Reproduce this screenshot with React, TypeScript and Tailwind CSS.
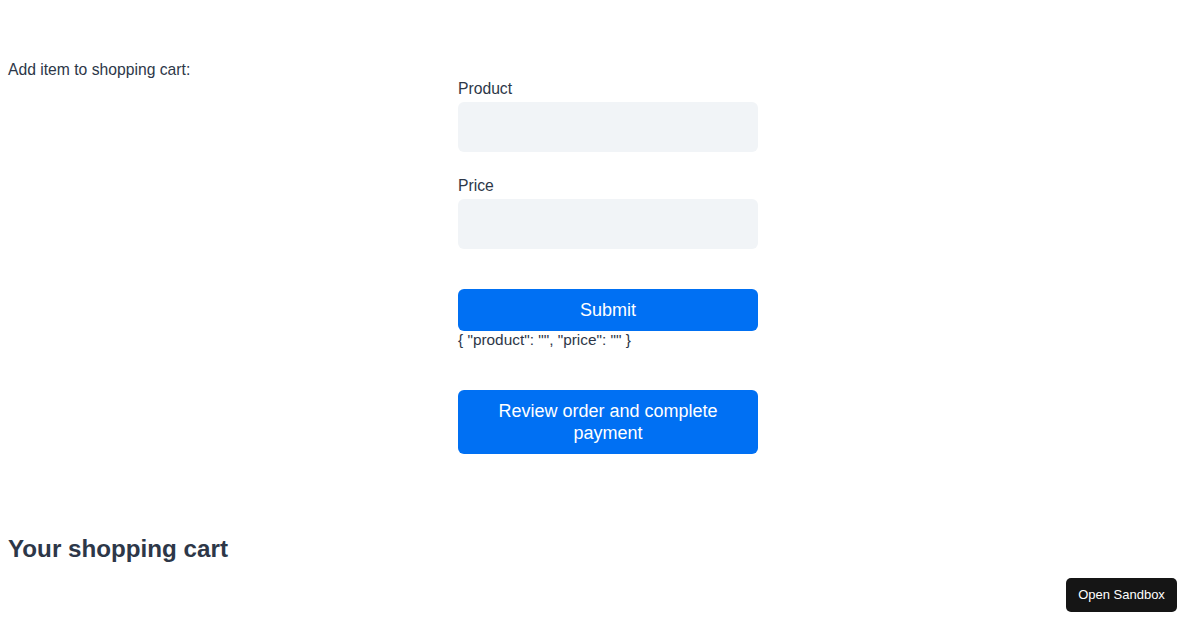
import { useState } from "react";

export default function App(): React.JSX.Element {
  const [product, setProduct] = useState("");
  const [price, setPrice] = useState("");

  return (
    <div className="min-h-[630px] bg-white px-2 pt-[60px] font-['Liberation_Sans',Arial,sans-serif] text-[15.7px] text-[#2d3748]">
      <div className="flex items-start">
        <p className="w-[450px] shrink-0 leading-5">Add item to shopping cart:</p>

        <form
          className="mt-[19px] flex w-[300px] flex-col"
          onSubmit={(e) => e.preventDefault()}
        >
          <label htmlFor="product" className="leading-5">
            Product
          </label>
          <input
            id="product"
            value={product}
            onChange={(e) => setProduct(e.target.value)}
            className="mt-[3px] h-[50px] rounded-[6px] bg-[#f1f4f7] px-3 outline-none"
          />

          <label htmlFor="price" className="mt-[24px] leading-5">
            Price
          </label>
          <input
            id="price"
            value={price}
            onChange={(e) => setPrice(e.target.value)}
            className="mt-[3px] h-[50px] rounded-[6px] bg-[#f1f4f7] px-3 outline-none"
          />

          <button
            type="submit"
            className="mt-[40px] rounded-[6px] bg-[#0070f3] py-[10px] text-[18px] leading-[22px] text-white"
          >
            Submit
          </button>

          <p className="text-[15.4px] leading-[18px]">
            {JSON.stringify({ product, price }).replace(/^\{/, "{ ").replace(/\}$/, " }").replace(/,/g, ", ").replace(/":/g, "\": ")}
          </p>

          <button
            type="button"
            className="mt-[41px] rounded-[6px] bg-[#0070f3] px-10 py-[10px] text-[18px] leading-[22px] text-white"
          >
            Review order and complete payment
          </button>
        </form>
      </div>

      <h2 className="mt-[81px] text-[24.2px] font-bold leading-[28px]">Your shopping cart</h2>

      <button
        type="button"
        className="fixed bottom-[18px] right-[23px] h-[34px] w-[111px] rounded-[5px] bg-[#151515] text-[13px] text-white"
      >
        Open Sandbox
      </button>
    </div>
  );
}
